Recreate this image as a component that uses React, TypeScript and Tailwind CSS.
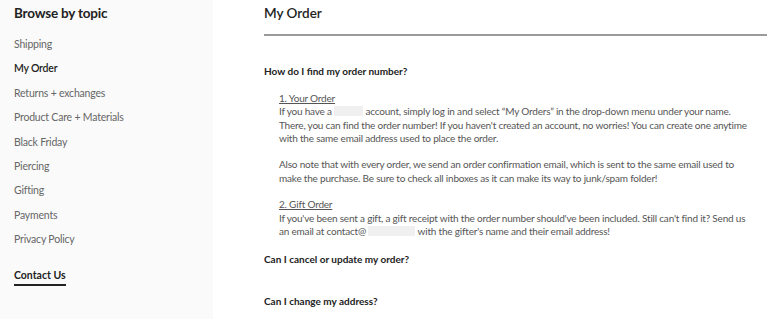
const topics = [
  "Shipping",
  "My Order",
  "Returns + exchanges",
  "Product Care + Materials",
  "Black Friday",
  "Piercing",
  "Gifting",
  "Payments",
  "Privacy Policy",
];

function Blank({ w }: { w: string }) {
  return <span className={`inline-block h-[10px] align-[-1px] bg-[#f0f0f0] ${w}`} />;
}

export default function App() {
  return (
    <div
      className="flex h-[319px] w-[768px] overflow-hidden bg-white text-[#555]"
      style={{ fontFamily: "Lato, 'Noto Sans', sans-serif" }}
    >
      {/* Sidebar */}
      <aside className="w-[213px] shrink-0 bg-[#fafafa] pl-[14px] pt-[4px]">
        <h2 className="text-[13.5px] font-bold leading-[18px] tracking-[-0.2px] text-[#222]">
          Browse by topic
        </h2>
        <ul className="mt-[15px]">
          {topics.map((t) => (
            <li
              key={t}
              className={
                t === "My Order"
                  ? "h-[24.4px] text-[10.5px] leading-[14px] tracking-[-0.2px] font-semibold text-[#222]"
                  : "h-[24.4px] text-[10.5px] leading-[14px] tracking-[-0.2px] text-[#666]"
              }
            >
              {t}
            </li>
          ))}
        </ul>
        <a className="mt-[11px] inline-block border-b-2 border-[#222] pb-[2px] text-[10.5px] font-bold leading-[14px] text-[#222]">
          Contact Us
        </a>
      </aside>

      {/* Content */}
      <main className="flex-1 pl-[51px] pr-[1px] pt-[4px]">
        <h1 className="text-[13.5px] font-semibold leading-[18px] text-[#222]">My Order</h1>
        <div className="mt-[12px] h-[2px] bg-[#9a9a9a]" />

        <h3 className="mt-[28px] text-[10px] font-bold leading-[14px] text-[#222]">
          How do I find my order number?
        </h3>

        <div className="mt-[14px] pl-[15px] text-[10px] leading-[13.3px] tracking-[-0.2px] whitespace-nowrap">
          <p className="underline">1. Your Order</p>
          <p>
            If you have a <Blank w="w-[29px]" /> account, simply log in and select “My Orders” in the drop-down menu under your name.
            <br />
            There, you can find the order number! If you haven't created an account, no worries! You can create one anytime
            <br />
            with the same email address used to place the order.
          </p>
          <p className="mt-[13.3px]">
            Also note that with every order, we send an order confirmation email, which is sent to the same email used to
            <br />
            make the purchase. Be sure to check all inboxes as it can make its way to junk/spam folder!
          </p>
          <p className="mt-[13.3px] underline">2. Gift Order</p>
          <p>
            If you've been sent a gift, a gift receipt with the order number should've been included. Still can't find it? Send us
            <br />
            an email at contact@ <Blank w="w-[47px]" /> with the gifter's name and their email address!
          </p>
        </div>

        <h3 className="mt-[14px] text-[10px] font-bold leading-[14px] text-[#222]">
          Can I cancel or update my order?
        </h3>
        <h3 className="mt-[28px] text-[10px] font-bold leading-[14px] text-[#222]">
          Can I change my address?
        </h3>
      </main>
    </div>
  );
}
